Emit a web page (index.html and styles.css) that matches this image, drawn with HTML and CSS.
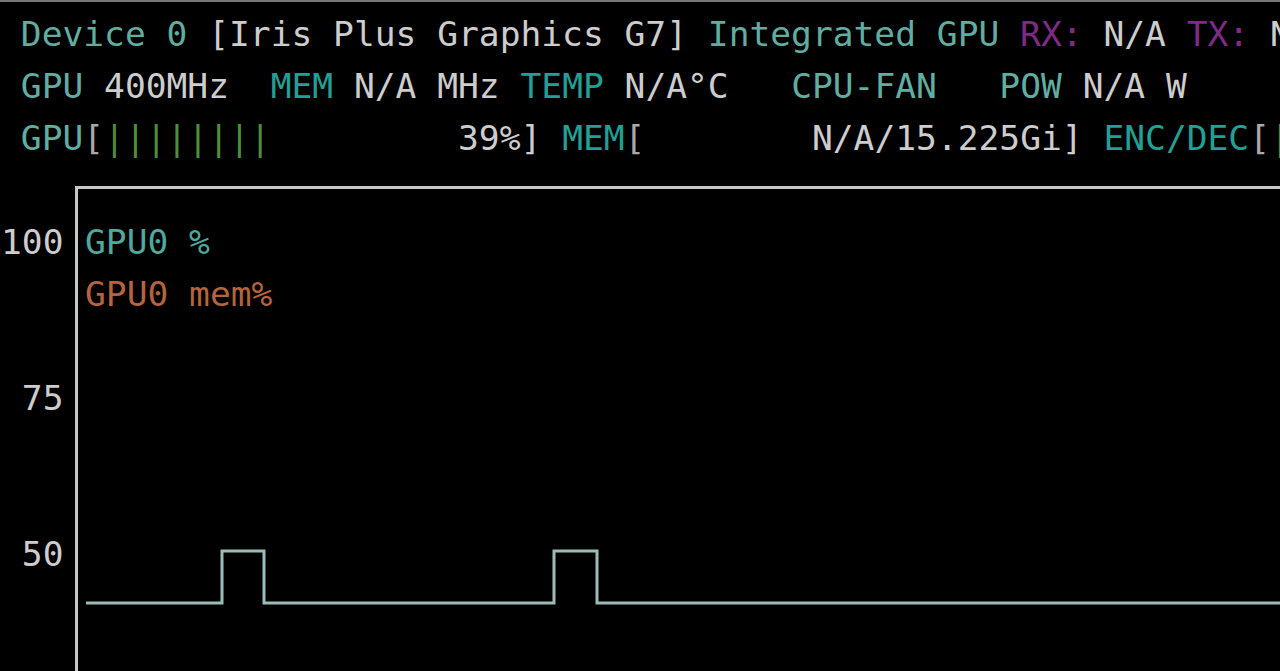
FILE: index.html
```html
<!DOCTYPE html>
<html>
<head>
<meta charset="utf-8">
<title>nvtop</title>
<link rel="stylesheet" href="styles.css">
</head>
<body>
<div class="term">
  <div class="header">
    <div class="row"><span class="t1"> Device 0</span><span class="w"> [Iris Plus Graphics G7] </span><span class="t1">Integrated GPU</span> <span class="p">RX:</span><span class="w"> N/A </span><span class="p">TX:</span><span class="w"> N/A</span></div>
    <div class="row"><span class="t1"> GPU</span><span class="w"> 400MHz  </span><span class="t2">MEM</span><span class="w"> N/A MHz </span><span class="t2">TEMP</span><span class="w"> N/A°C   </span><span class="t1">CPU-FAN</span><span class="w">   </span><span class="t1">POW</span><span class="w"> N/A W</span></div>
    <div class="row"><span class="t1"> GPU</span><span class="g">[</span><span class="bar">||||||||</span><span class="w">         39%]</span> <span class="t2">MEM</span><span class="g">[</span><span class="w">        N/A/15.225Gi]</span> <span class="t2">ENC/DEC</span><span class="g">[</span><span class="bar">|</span></div>
  </div>
  <div class="graph">
    <div class="axis">
      <div class="tick">100</div>
      <div class="tick"></div>
      <div class="tick"></div>
      <div class="tick"> 75</div>
      <div class="tick"></div>
      <div class="tick"></div>
      <div class="tick"> 50</div>
    </div>
    <div class="plot">
      <div class="legend">
        <div class="row leg-gpu">GPU0 %</div>
        <div class="row leg-mem">GPU0 mem%</div>
      </div>
      <svg class="curve" width="1202" height="482" viewBox="0 0 1202 482">
        <polyline points="8,414 144,414 144,362 186,362 186,414 476,414 476,362 519,362 519,414 1202,414" fill="none" stroke="#9abdb8" stroke-width="3"/>
      </svg>
    </div>
  </div>
</div>
</body>
</html>
```
FILE: styles.css
```css
html, body {
  margin: 0;
  padding: 0;
  background: #000;
}
body {
  width: 1280px;
  height: 671px;
  overflow: hidden;
  border-top: 2px solid #777;
  box-sizing: border-box;
}
.term {
  font-family: "DejaVu Sans Mono", monospace;
  font-size: 34.6px;
  color: #cdcdcd;
  padding-top: 6px;
}
.row {
  height: 52px;
  line-height: 52px;
  white-space: pre;
  overflow: hidden;
}
.t1 { color: #60ada1; }
.t2 { color: #21a096; }
.w { color: #cdcdcd; }
.g { color: #a9a9a9; }
.p { color: #7f2a86; }
.bar { color: #4e8f3c; }
.graph {
  display: flex;
  height: 507px;
}
.axis {
  width: 75px;
  flex: none;
  padding-top: 52px;
}
.tick {
  height: 52px;
  line-height: 52px;
  white-space: pre;
  color: #cdcdcd;
  padding-left: 1px;
}
.plot {
  position: relative;
  flex: 1;
  margin-top: 22px;
  border-top: 3px solid #c6c6c6;
  border-left: 3px solid #c6c6c6;
  padding-top: 27px;
  padding-left: 7px;
}
.leg-gpu { color: #4fa99c; }
.leg-mem { color: #b6643e; }
.curve {
  position: absolute;
  left: 0;
  top: 0;
}
```
